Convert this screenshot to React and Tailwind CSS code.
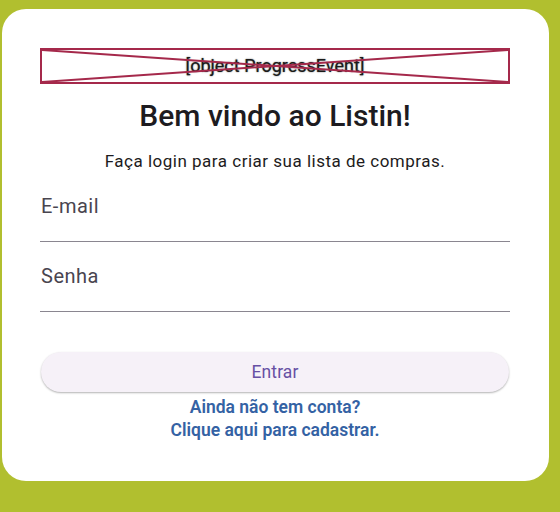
export default function App() {
  return (
    <div
      className="w-[560px] h-[512px] bg-[#b1bf2f] overflow-hidden pt-[9px] pl-[2px]"
      style={{ fontFamily: "Roboto, 'Noto Sans', sans-serif" }}
    >
      <div className="w-[547px] h-[472px] bg-white rounded-[24px] pl-[38px] pr-[39px] pt-[39px]">
        {/* broken image placeholder */}
        <div className="relative h-[36px] border-2 border-[#a5294b] flex items-center justify-center">
          <span className="text-[18px] leading-[22px] text-[#1a1a1a] [text-shadow:0_0_1.5px_rgba(0,0,0,0.7)]">
            [object ProgressEvent]
          </span>
          <svg
            className="absolute inset-0 w-full h-full"
            viewBox="0 0 466 32"
            preserveAspectRatio="none"
          >
            <line x1="0" y1="0" x2="466" y2="32" stroke="#a5294b" strokeWidth="2" />
            <line x1="0" y1="32" x2="466" y2="0" stroke="#a5294b" strokeWidth="2" />
          </svg>
        </div>

        <h1 className="mt-[14px] text-center text-[30px] leading-[36px] font-medium text-[#1d1b20]">
          Bem vindo ao Listin!
        </h1>
        <p className="mt-[15px] text-center text-[17px] leading-[24px] tracking-[0.5px] text-[#1d1b20]">
          Faça login para criar sua lista de compras.
        </p>

        <div className="pt-[19px] pb-[21px] border-b border-[#8a8690]">
          <div className="text-[20px] leading-[28px] tracking-[0.5px] text-[#49454f] pl-[1px]">
            E-mail
          </div>
        </div>
        <div className="pt-[20px] pb-[21px] border-b border-[#8a8690]">
          <div className="text-[20px] leading-[28px] tracking-[0.5px] text-[#49454f] pl-[1px]">
            Senha
          </div>
        </div>

        <button className="mt-[40px] ml-[1px] w-[468px] h-[40px] rounded-full bg-[#f6f1f8] shadow-[0_1px_2px_rgba(0,0,0,0.3)] text-[17.5px] text-[#6750a4] tracking-[0.1px]">
          Entrar
        </button>

        <div className="mt-[4px] text-center text-[17.5px] leading-[23px] font-semibold text-[#3462a4]">
          <div>Ainda não tem conta?</div>
          <div>Clique aqui para cadastrar.</div>
        </div>
      </div>
    </div>
  );
}
